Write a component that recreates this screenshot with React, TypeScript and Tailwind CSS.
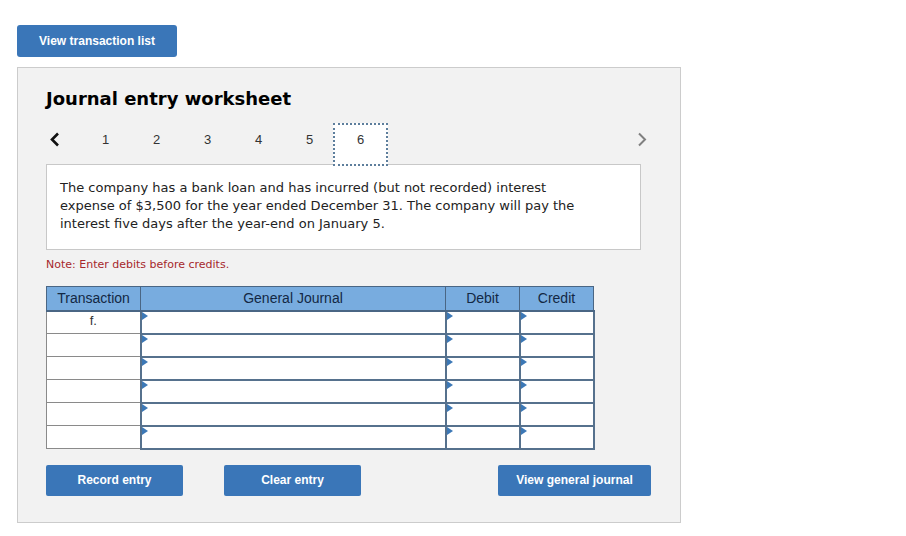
import React from "react";

const arial = { fontFamily: '"Liberation Sans", Arial, sans-serif' };
const verdana = { fontFamily: '"DejaVu Sans", Verdana, sans-serif' };

const Flag = () => (
  <span className="absolute left-0 top-0 h-0 w-0 border-y-[4px] border-l-[6px] border-y-transparent border-l-[#3c78b6]" />
);

const rows = ["f.", "", "", "", "", ""];

export default function App() {
  return (
    <div className="min-h-screen bg-white pl-[17px] pt-[25px]" style={arial}>
      <button className="h-[32px] w-[160px] rounded-[3px] bg-[#3a76b8] text-[12px] font-bold text-white">
        View transaction list
      </button>

      <div className="mt-[10px] w-[664px] border border-[#cccccc] bg-[#f2f2f2] pb-[26px] pl-[28px] pr-[39px] pt-[19px]">
        <h1 className="text-[18px] font-bold leading-[24px] text-black" style={verdana}>
          Journal entry worksheet
        </h1>

        <div className="mt-[12px] flex h-[43px] items-start text-[13px] leading-[15px] text-[#333]">
          <div className="flex w-[34px] items-center pl-[3px] pt-[9px]">
            <svg width="12" height="15" viewBox="0 0 12 15">
              <path d="M9 1.5 3 7.5l6 6" fill="none" stroke="#111" strokeWidth="2.6" />
            </svg>
          </div>
          {[1, 2, 3, 4, 5].map((n) => (
            <div key={n} className="flex h-full w-[51px] justify-center pt-[9px]">
              {n}
            </div>
          ))}
          <div className="relative z-10 -mx-[2px] flex h-full w-[55px] justify-center border-2 border-dotted border-[#5d7e9c] bg-white pt-[7px]">
            6
          </div>
          <div className="flex-1" />
          <div className="-mr-[15px] flex w-[20px] items-center pt-[9px]">
            <svg width="12" height="15" viewBox="0 0 12 15">
              <path d="M3 1.5l6 6-6 6" fill="none" stroke="#808080" strokeWidth="2" />
            </svg>
          </div>
        </div>

        <div
          className="-mt-[2px] h-[86px] border border-[#c8c8c8] bg-white px-[13px] pt-[14px] text-[13px] leading-[18px] text-[#222]"
          style={verdana}
        >
          The company has a bank loan and has incurred (but not recorded) interest
          <br />
          expense of $3,500 for the year ended December 31. The company will pay the
          <br />
          interest five days after the year-end on January 5.
        </div>

        <p className="mt-[8px] text-[11px] leading-[14px] text-[#a6282c]" style={verdana}>
          Note: Enter debits before credits.
        </p>

        <table className="mt-[14px] w-[547px] table-fixed border-collapse border border-[#7a7a7a] text-[14px]">
          <colgroup>
            <col className="w-[94px]" />
            <col className="w-[305px]" />
            <col className="w-[74px]" />
            <col className="w-[74px]" />
          </colgroup>
          <thead>
            <tr className="h-[24px] bg-[#78acdf] text-[#132844]">
              <th className="border border-b-2 border-[#4a6684] font-normal">Transaction</th>
              <th className="border border-b-2 border-[#4a6684] font-normal">General Journal</th>
              <th className="border border-b-2 border-[#4a6684] font-normal">Debit</th>
              <th className="border border-b-2 border-[#4a6684] font-normal">Credit</th>
            </tr>
          </thead>
          <tbody>
            {rows.map((t, i) => (
              <tr key={i} className="h-[23px]">
                <td className="border border-[#8a8a8a] bg-white pb-[3px] text-center text-[13px] leading-none text-[#333]">
                  {t}
                </td>
                {[0, 1, 2].map((c) => (
                  <td key={c} className="relative border-2 border-[#56718d] bg-white p-0">
                    <Flag />
                  </td>
                ))}
              </tr>
            ))}
          </tbody>
        </table>

        <div className="mt-[15px] flex items-center text-[12px] font-bold text-white">
          <button className="h-[31px] w-[137px] rounded-[2px] bg-[#3a76b8]">Record entry</button>
          <button className="ml-[41px] h-[31px] w-[137px] rounded-[2px] bg-[#3a76b8]">Clear entry</button>
          <div className="flex-1" />
          <button className="-mr-[10px] h-[31px] w-[153px] rounded-[2px] bg-[#3a76b8]">
            View general journal
          </button>
        </div>
      </div>
    </div>
  );
}
